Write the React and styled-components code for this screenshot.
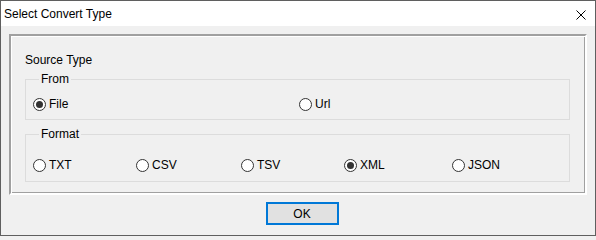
import React from 'react'
import styled, { createGlobalStyle } from 'styled-components'

const GlobalStyle = createGlobalStyle`
  html, body {
    margin: 0;
    padding: 0;
    background: #f0f0f0;
  }
  * {
    box-sizing: border-box;
  }
`

const Window = styled.div`
  width: 596px;
  height: 236px;
  border: 1px solid #5f5f5f;
  background: #f0f0f0;
  display: flex;
  flex-direction: column;
  font-family: 'Liberation Sans', Arial, sans-serif;
  font-size: 12px;
  color: #000;
`

const TitleBar = styled.div`
  height: 25px;
  flex: none;
  background: #fff;
  display: flex;
  align-items: center;
  justify-content: space-between;
  padding: 0 9px 0 3px;
`

const Title = styled.span`
  line-height: 14px;
`

const CloseButton = styled.button`
  width: 10px;
  height: 10px;
  padding: 0;
  border: none;
  background: none;
  display: flex;
  margin-top: 2px;
`

const Body = styled.div`
  flex: 1;
  padding: 8px 8px 0 8px;
  display: flex;
  flex-direction: column;
`

const Panel = styled.div`
  height: 161px;
  border-style: solid;
  border-width: 2px;
  border-color: #a0a0a0 #fff #fff #a0a0a0;
  box-shadow: inset 1px 1px 0 #fff, inset -1px -1px 0 #a0a0a0;
  padding: 17px 15px 0 14px;
  display: flex;
  flex-direction: column;
`

const Heading = styled.div`
  line-height: 14px;
  margin-bottom: 5px;
`

const Group = styled.fieldset`
  margin: ${(p) => p.$gapTop || 0}px 0 0 0;
  padding: ${(p) => p.$padTop}px 0 ${(p) => p.$padBottom}px 7px;
  border: 1px solid #dcdcdc;
  min-width: 0;
`

const Legend = styled.legend`
  margin-left: 6px;
  padding: 0 2px;
  line-height: 14px;
`

const Options = styled.div`
  display: grid;
  grid-template-columns: ${(p) => p.$columns};
  align-items: center;
`

const Option = styled.label`
  display: flex;
  align-items: center;
  gap: 3px;
  line-height: 14px;
  height: 14px;
`

const Dot = styled.span`
  width: 13px;
  height: 13px;
  flex: none;
  border: 1px solid #333;
  border-radius: 50%;
  background: #fff;
  display: flex;
  align-items: center;
  justify-content: center;

  &::after {
    content: '';
    width: 7px;
    height: 7px;
    border-radius: 50%;
    background: ${(p) => (p.$checked ? '#333' : 'transparent')};
  }
`

const Footer = styled.div`
  display: flex;
  justify-content: center;
  padding-left: 8px;
  margin-top: 7px;
`

const OkButton = styled.button`
  width: 73px;
  height: 23px;
  border: 2px solid #0078d7;
  background: #e1e1e1;
  font: inherit;
  color: #000;
  padding: 0;
`

const sources = [
  { name: 'File', checked: true },
  { name: 'Url' }
]

const formats = [
  { name: 'TXT' },
  { name: 'CSV' },
  { name: 'TSV' },
  { name: 'XML', checked: true },
  { name: 'JSON' }
]

const Radio = ({ name, checked }) => (
  <Option>
    <Dot $checked={checked} />
    {name}
  </Option>
)

export default function App() {
  return (
    <>
      <GlobalStyle />
      <Window>
        <TitleBar>
          <Title>Select Convert Type</Title>
          <CloseButton aria-label="Close">
            <svg width="10" height="10" viewBox="0 0 10 10">
              <path d="M0.5 0.5 L9.5 9.5 M9.5 0.5 L0.5 9.5" stroke="#000" strokeWidth="1" fill="none" />
            </svg>
          </CloseButton>
        </TitleBar>
        <Body>
          <Panel>
            <Heading>Source Type</Heading>
            <Group $padTop={11} $padBottom={8}>
              <Legend>From</Legend>
              <Options $columns="266px auto">
                {sources.map((s) => (
                  <Radio key={s.name} {...s} />
                ))}
              </Options>
            </Group>
            <Group $gapTop={7} $padTop={17} $padBottom={9}>
              <Legend>Format</Legend>
              <Options $columns="103px 105px 103px 108px auto">
                {formats.map((f) => (
                  <Radio key={f.name} {...f} />
                ))}
              </Options>
            </Group>
          </Panel>
          <Footer>
            <OkButton>OK</OkButton>
          </Footer>
        </Body>
      </Window>
    </>
  )
}
